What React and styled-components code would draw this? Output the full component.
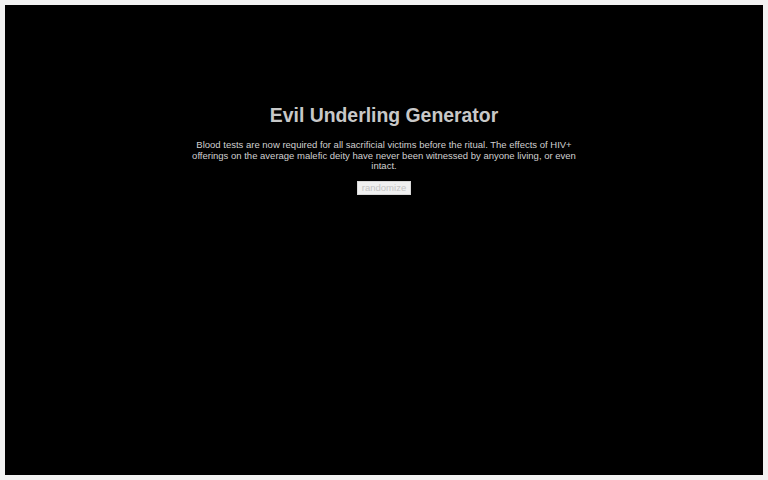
import React from "react";
import styled, { createGlobalStyle } from "styled-components";

const Global = createGlobalStyle`
  html, body { margin: 0; padding: 0; background: #f2f2f2; }
  body { font-family: "Liberation Sans", Arial, sans-serif; }
`;

const Frame = styled.div`
  margin: 5px;
  height: 470px;
  background: #000;
  display: flex;
  flex-direction: column;
  align-items: center;
  padding-top: 98px;
  box-sizing: border-box;
`;

const Title = styled.h1`
  margin: 0;
  font-size: 19.4px;
  font-weight: bold;
  color: #c8c8c8;
  line-height: 24px;
`;

const Blurb = styled.p`
  margin: 13px 0 0;
  width: 392px;
  text-align: center;
  font-size: 9.5px;
  line-height: 10.6px;
  color: #d0d0d0;
`;

const Button = styled.button`
  margin-top: 9px;
  font-family: "Liberation Sans", Arial, sans-serif;
  font-size: 9.5px;
  line-height: 12px;
  padding: 0 4px;
  height: 14px;
  background: #f0f0f0;
  color: #c4c4c4;
  border: 1px solid #d8d8d8;
  border-radius: 0;
`;

export default function App() {
  return (
    <>
      <Global />
      <Frame>
        <Title>Evil Underling Generator</Title>
        <Blurb>
          Blood tests are now required for all sacrificial victims before the
          ritual. The effects of HIV+ offerings on the average malefic deity
          have never been witnessed by anyone living, or even intact.
        </Blurb>
        <Button>randomize</Button>
      </Frame>
    </>
  );
}
